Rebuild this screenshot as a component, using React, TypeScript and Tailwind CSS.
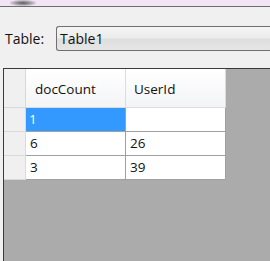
const rows = [
  { doc: "1", user: "", selected: true },
  { doc: "6", user: "26", selected: false },
  { doc: "3", user: "39", selected: false },
];

const font = { fontFamily: '"Open Sans", "Noto Sans", sans-serif' };

export default function App() {
  return (
    <div
      className="flex h-[261px] w-[270px] flex-col overflow-hidden bg-[#f0f0f0] text-[#111]"
      style={font}
    >
      {/* window edge */}
      <div className="flex h-[6px] shrink-0 bg-[#f1e4f5]">
        <div className="ml-[10px] h-full w-[26px] bg-[radial-gradient(ellipse_at_center,#5a5a5a_0%,#a9a2ab_45%,transparent_80%)]" />
      </div>
      <div className="h-px shrink-0 bg-[#6e6e6e]" />

      {/* table picker */}
      <div className="mt-[19px] flex h-[25px] shrink-0 items-center">
        <span className="ml-[5px] w-[51px] text-[14px] leading-none">Table:</span>
        <div className="flex h-full flex-1 items-center rounded-l-[3px] border border-r-0 border-[#707070] bg-[linear-gradient(#f4f4f4_0%,#ececec_48%,#dedede_52%,#e6e6e6_100%)] pl-[3px] text-[14px] leading-none">
          Table1
        </div>
      </div>

      {/* grid */}
      <div className="ml-[3px] mt-[17px] flex-1 border-l border-t border-[#3a3a3a] bg-[#ababab]">
        <div className="w-[222px] bg-white text-[13.5px]">
          <div className="flex h-[39px]">
            <div className="w-[22px] border-r border-b border-[#d8d8d8] bg-[#f0f0f0]" />
            <div className="flex w-[100px] items-center border-r border-b border-[#dcdcdc] bg-[linear-gradient(#ffffff,#f3f4f6)] pl-[9px] pt-[2px]">
              docCount
            </div>
            <div className="flex w-[100px] items-center border-r border-b border-[#dcdcdc] bg-[linear-gradient(#ffffff,#f3f4f6)] pl-[8px] pt-[2px]">
              UserId
            </div>
          </div>
          {rows.map((r) => (
            <div key={r.doc} className="flex h-[24px]">
              <div className="w-[22px] border-r border-b border-[#dadada] bg-[#f0f0f0]" />
              <div
                className={
                  r.selected
                    ? "flex w-[100px] items-center border-r border-b border-[#a0a0a0] bg-[#3399ff] pl-[3px] text-white"
                    : "flex w-[100px] items-center border-r border-b border-[#a0a0a0] pl-[4px]"
                }
              >
                {r.doc}
              </div>
              <div className="flex w-[100px] items-center border-r border-b border-[#a0a0a0] pl-[4px]">
                {r.user}
              </div>
            </div>
          ))}
        </div>
      </div>
    </div>
  );
}
